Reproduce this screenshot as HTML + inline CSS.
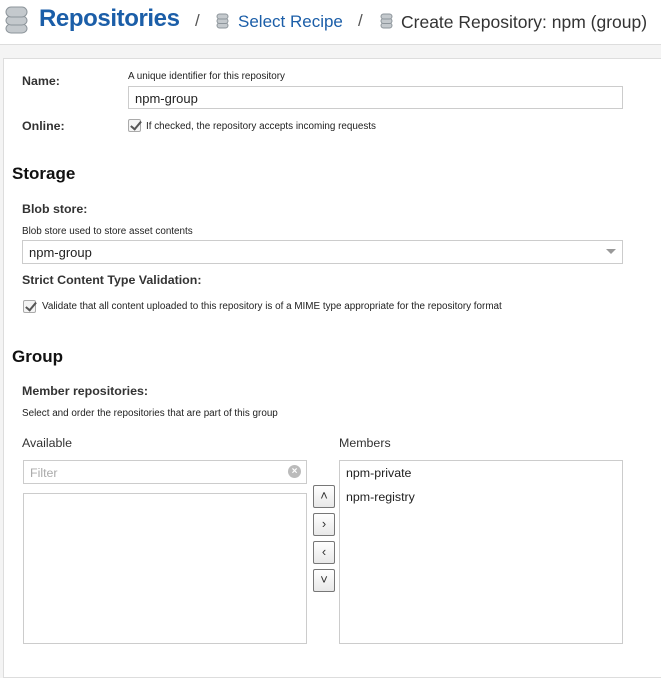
<!DOCTYPE html><html><head><style>
*{box-sizing:border-box;margin:0;padding:0}
body{width:661px;height:665px;overflow:hidden;background:#f4f4f4;font-family:"Liberation Sans",Arial,sans-serif;color:#222;position:relative}
.a{position:absolute;white-space:nowrap}
.hdr{position:absolute;left:0;top:0;width:661px;height:45px;background:#fff;border-bottom:1px solid #ddd}
.panel{position:absolute;left:3px;top:58px;width:670px;height:620px;background:#fff;border:1px solid #ddd}
.lbl{font-size:12.4px;font-weight:bold;color:#333}
.help{font-size:9.9px;color:#222}
.box{position:absolute;border:1px solid #ccc;background:#fff}
.inp{font-size:13px;color:#222;padding:4px 0 0 6px}
.cb{position:absolute;width:13px;height:13px;border:1px solid #aaa;border-radius:2px;background:#f4f4f4}
.cb::after{content:"";position:absolute;left:4px;top:-1px;width:4px;height:9px;border:solid #555;border-width:0 2px 2px 0;transform:rotate(40deg)}
h2{position:absolute;font-size:17px;font-weight:bold;color:#111}
.btn{position:absolute;left:313px;width:22px;height:23px;border:1px solid #777;border-radius:2px;background:linear-gradient(#fff,#e8e8e8);font-size:13px;text-align:center;line-height:20px;color:#333}
</style></head><body>
<div class="hdr">
<svg class="a" style="left:5px;top:6px" width="23" height="28" viewBox="0 0 23 28"><g fill="#c4c9cd" stroke="#8d959b" stroke-width="1"><rect x="1" y="18" width="21" height="9" rx="5"/><rect x="1" y="10" width="21" height="9" rx="5"/><rect x="1" y="1" width="21" height="10" rx="5"/></g></svg>
<div class="a" style="left:39px;top:5px;font-size:24px;font-weight:bold;color:#1b5ea8;letter-spacing:-0.4px">Repositories</div>
<div class="a" style="left:195px;top:11px;font-size:17px;color:#555">/</div>
<svg class="a" style="left:216px;top:13px" width="13" height="16" viewBox="0 0 13 16"><g fill="#c4c9cd" stroke="#8d959b"><rect x="1" y="10" width="11" height="5" rx="2.5"/><rect x="1" y="5.5" width="11" height="5" rx="2.5"/><rect x="1" y="1" width="11" height="5" rx="2.5"/></g></svg>
<div class="a" style="left:238px;top:12px;font-size:17px;color:#1b5ea8">Select Recipe</div>
<div class="a" style="left:358px;top:11px;font-size:17px;color:#555">/</div>
<svg class="a" style="left:380px;top:13px" width="13" height="16" viewBox="0 0 13 16"><g fill="#c4c9cd" stroke="#8d959b"><rect x="1" y="10" width="11" height="5" rx="2.5"/><rect x="1" y="5.5" width="11" height="5" rx="2.5"/><rect x="1" y="1" width="11" height="5" rx="2.5"/></g></svg>
<div class="a" style="left:401px;top:12px;font-size:17.5px;color:#333">Create Repository: npm (group)</div>
</div>
<div class="panel"></div>
<div class="a lbl" style="left:22px;top:74px">Name:</div>
<div class="a help" style="left:128px;top:71px">A unique identifier for this repository</div>
<div class="box inp" style="left:128px;top:86px;width:495px;height:23px">npm-group</div>
<div class="a lbl" style="left:22px;top:119px">Online:</div>
<div class="cb" style="left:128px;top:119px"></div>
<div class="a help" style="left:146px;top:121px">If checked, the repository accepts incoming requests</div>
<h2 style="left:12px;top:164px">Storage</h2>
<div class="a lbl" style="left:22px;top:202px">Blob store:</div>
<div class="a help" style="left:22px;top:226px">Blob store used to store asset contents</div>
<div class="box inp" style="left:22px;top:240px;width:601px;height:24px">npm-group</div>
<div class="a" style="left:606px;top:249px;width:0;height:0;border-left:5px solid transparent;border-right:5px solid transparent;border-top:5px solid #999"></div>
<div class="a lbl" style="left:22px;top:273px">Strict Content Type Validation:</div>
<div class="cb" style="left:23px;top:300px"></div>
<div class="a help" style="left:42px;top:301px">Validate that all content uploaded to this repository is of a MIME type appropriate for the repository format</div>
<h2 style="left:12px;top:347px">Group</h2>
<div class="a lbl" style="left:22px;top:384px">Member repositories:</div>
<div class="a help" style="left:22px;top:408px">Select and order the repositories that are part of this group</div>
<div class="a" style="left:22px;top:436px;font-size:12.4px;color:#333">Available</div>
<div class="a" style="left:339px;top:436px;font-size:12.4px;color:#333">Members</div>
<div class="box" style="left:23px;top:460px;width:284px;height:24px;font-size:12.4px;color:#aaa;padding:5px 0 0 6px">Filter</div>
<div class="a" style="left:288px;top:465px;width:13px;height:13px;border-radius:50%;background:#bbb;color:#fff;font-size:10px;font-weight:bold;text-align:center;line-height:13px">×</div>
<div class="box" style="left:23px;top:493px;width:284px;height:151px"></div>
<div class="btn" style="top:485px">˄</div>
<div class="btn" style="top:513px">›</div>
<div class="btn" style="top:541px">‹</div>
<div class="btn" style="top:569px">˅</div>
<div class="box" style="left:339px;top:460px;width:284px;height:184px"></div>
<div class="a" style="left:346px;top:466px;font-size:12.4px">npm-private</div>
<div class="a" style="left:346px;top:490px;font-size:12.4px">npm-registry</div>
</body></html>
